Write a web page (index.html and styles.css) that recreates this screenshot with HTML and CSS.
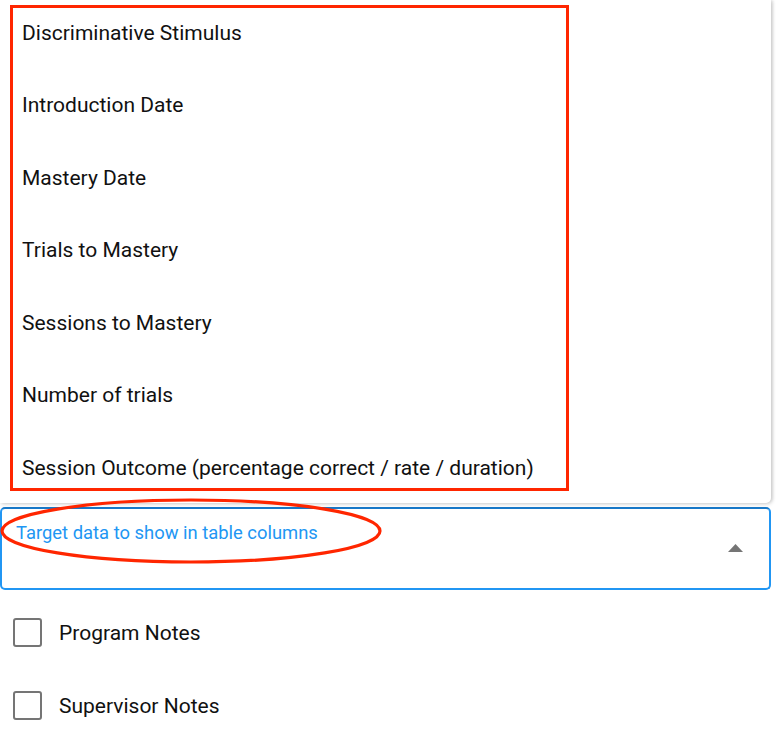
FILE: index.html
```html
<!DOCTYPE html>
<html lang="en">
<head>
<meta charset="utf-8">
<title>Target data columns</title>
<link rel="stylesheet" href="styles.css">
</head>
<body>
<div class="page">
  <div class="menu">
    <ul class="menu-list">
      <li class="menu-item">Discriminative Stimulus</li>
      <li class="menu-item">Introduction Date</li>
      <li class="menu-item">Mastery Date</li>
      <li class="menu-item">Trials to Mastery</li>
      <li class="menu-item">Sessions to Mastery</li>
      <li class="menu-item">Number of trials</li>
      <li class="menu-item">Session Outcome (percentage correct / rate / duration)</li>
    </ul>
    <div class="annot-rect"></div>
  </div>

  <div class="select">
    <span class="select-label">Target data to show in table columns</span>
    <svg class="select-arrow" viewBox="0 0 15 8" width="15" height="8" aria-hidden="true">
      <path d="M0 8 L7.5 0 L15 8 Z" fill="#757575"/>
    </svg>
  </div>

  <svg class="annot-ellipse" width="400" height="80" viewBox="0 0 400 80" aria-hidden="true">
    <ellipse cx="191" cy="36" rx="189" ry="31" fill="none" stroke="#ff2600" stroke-width="3.2"/>
  </svg>

  <div class="checks">
    <label class="check-row"><span class="check-box"></span><span class="check-text">Program Notes</span></label>
    <label class="check-row"><span class="check-box"></span><span class="check-text">Supervisor Notes</span></label>
  </div>
</div>
</body>
</html>
```

FILE: styles.css
```css
html, body {
  margin: 0;
  padding: 0;
  background: #ffffff;
}

body {
  font-family: Roboto, "Liberation Sans", Arial, sans-serif;
  color: #111111;
  width: 783px;
  height: 740px;
  overflow: hidden;
}

.page {
  position: relative;
  width: 783px;
}

.menu {
  position: relative;
  width: 771px;
  height: 503px;
  background: #ffffff;
  border-bottom-right-radius: 5px;
  box-shadow: 1px 1px 4px rgba(0, 0, 0, 0.18), 2px 0 3px rgba(0, 0, 0, 0.08);
  overflow: hidden;
  z-index: 2;
}

.menu-list {
  list-style: none;
  margin: -3.5px 0 0 0;
  padding: 0;
}

.menu-item {
  height: 72.5px;
  display: flex;
  align-items: center;
  padding-left: 22px;
  font-size: 21px;
}

.annot-rect {
  position: absolute;
  left: 10px;
  top: 5px;
  width: 553px;
  height: 480px;
  border: 3px solid #ff2600;
}

.select {
  position: relative;
  margin-top: 4px;
  width: 767px;
  height: 79px;
  border: 2px solid #2196f3;
  border-top-color: #1878c8;
  border-radius: 5px;
  display: flex;
  align-items: flex-start;
  justify-content: space-between;
}

.select-label {
  margin: 13px 0 0 14px;
  font-size: 18.4px;
  color: #2196f3;
  line-height: 22px;
}

.select-arrow {
  margin: 35px 26px 0 0;
}

.annot-ellipse {
  position: absolute;
  left: 0;
  top: 495px;
  z-index: 3;
}

.checks {
  display: flex;
  flex-direction: column;
  gap: 44px;
  padding: 28px 0 0 13px;
}

.check-row {
  display: flex;
  align-items: center;
  gap: 17px;
  height: 29px;
}

.check-box {
  box-sizing: border-box;
  width: 29px;
  height: 29px;
  border: 2px solid #757575;
  border-radius: 3px;
}

.check-text {
  font-size: 21px;
}
```
